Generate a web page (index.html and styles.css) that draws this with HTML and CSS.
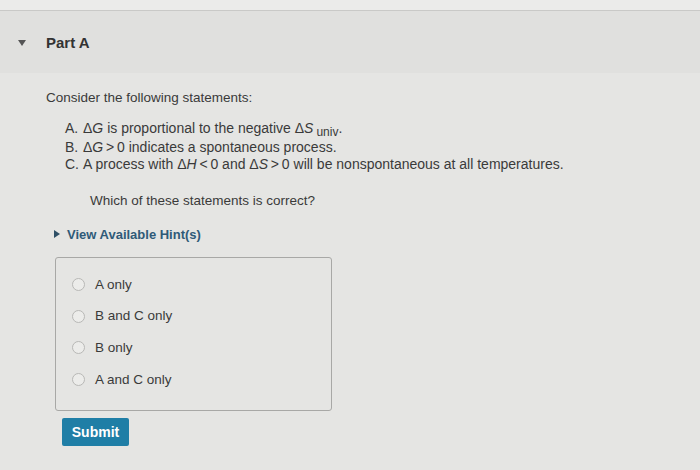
FILE: index.html
```html
<!DOCTYPE html>
<html>
<head>
<meta charset="utf-8">
<link rel="stylesheet" href="styles.css">
</head>
<body>
<div class="page">
  <div class="topstrip"></div>
  <div class="header">
    <span class="caret-down"></span>
    <span class="part-title">Part A</span>
  </div>
  <div class="content">
    <p class="intro">Consider the following statements:</p>
    <ol class="statements">
      <li><span class="lbl">A.</span><span><span class="m">&Delta;<i>G</i></span> is proportional to the negative <span class="m">&Delta;<i>S</i></span><span class="sub">univ</span>.</span></li>
      <li><span class="lbl">B.</span><span><span class="m">&Delta;<i>G</i>&thinsp;&gt;&thinsp;0</span> indicates a spontaneous process.</span></li>
      <li><span class="lbl">C.</span><span>A process with <span class="m">&Delta;<i>H</i>&thinsp;&lt;&thinsp;0</span> and <span class="m">&Delta;<i>S</i>&thinsp;&gt;&thinsp;0</span> will be nonspontaneous at all temperatures.</span></li>
    </ol>
    <p class="question">Which of these statements is correct?</p>
    <div class="hint">
      <span class="caret-right"></span>
      <span class="hint-text">View Available Hint(s)</span>
    </div>
    <div class="choices">
      <label class="choice"><span class="radio"></span><span>A only</span></label>
      <label class="choice"><span class="radio"></span><span>B and C only</span></label>
      <label class="choice"><span class="radio"></span><span>B only</span></label>
      <label class="choice"><span class="radio"></span><span>A and C only</span></label>
    </div>
    <button class="submit">Submit</button>
  </div>
</div>
</body>
</html>
```
FILE: styles.css
```css
html, body {
  margin: 0;
  padding: 0;
}
body {
  width: 700px;
  height: 470px;
  overflow: hidden;
  background: #e5e5e3;
  font-family: "Liberation Sans", Arial, sans-serif;
  color: #3a3a3a;
}
.page {
  width: 700px;
  height: 470px;
}
.topstrip {
  height: 10px;
  background: #ebebea;
  border-bottom: 1px solid #c9c9c7;
}
.header {
  height: 62px;
  background: #e0e0de;
  display: flex;
  align-items: center;
  padding-left: 18px;
  box-sizing: border-box;
}
.caret-down {
  width: 0;
  height: 0;
  border-left: 4px solid transparent;
  border-right: 4px solid transparent;
  border-top: 6px solid #555;
  margin-right: 20px;
  margin-top: 2px;
}
.part-title {
  font-size: 15px;
  font-weight: 600;
  color: #333;
}
.content {
  padding-left: 46px;
  padding-top: 16px;
}
.intro {
  margin: 0;
  font-size: 13.5px;
  line-height: 18px;
}
.statements {
  list-style: none;
  margin: 13px 0 0 0;
  padding-left: 19px;
  font-size: 14px;
  line-height: 17.5px;
}
.statements li {
  display: flex;
}
.lbl {
  width: 18px;
  flex: none;
}
.m i {
  font-style: italic;
}
.sub {
  font-size: 12px;
  position: relative;
  top: 3px;
  margin-left: 3px;
}
.question {
  margin: 18px 0 0 44px;
  font-size: 13.5px;
  line-height: 18px;
}
.hint {
  display: flex;
  align-items: center;
  margin: 17px 0 0 8px;
}
.caret-right {
  width: 0;
  height: 0;
  border-top: 4px solid transparent;
  border-bottom: 4px solid transparent;
  border-left: 6px solid #2e4f66;
  margin-right: 7px;
}
.hint-text {
  font-size: 13px;
  font-weight: bold;
  color: #2f5a78;
}
.choices {
  margin: 15px 0 0 9px;
  width: 277px;
  height: 154px;
  border: 1px solid #a8a8a6;
  border-radius: 3px;
  box-sizing: border-box;
  padding-top: 18px;
  display: flex;
  flex-direction: column;
  gap: 13.7px;
}
.choice {
  display: flex;
  align-items: center;
  font-size: 13.5px;
  line-height: 18px;
  padding-left: 16px;
}
.radio {
  width: 11px;
  height: 11px;
  border-radius: 50%;
  border: 1px solid #b8b8b6;
  background: #ececea;
  margin-right: 10px;
  flex: none;
}
.submit {
  margin: 7px 0 0 16px;
  width: 67px;
  height: 28px;
  border: none;
  border-radius: 2px;
  background: #1f7ea6;
  color: #fff;
  font-family: "Liberation Sans", Arial, sans-serif;
  font-weight: bold;
  font-size: 14px;
  padding: 0;
}
```
